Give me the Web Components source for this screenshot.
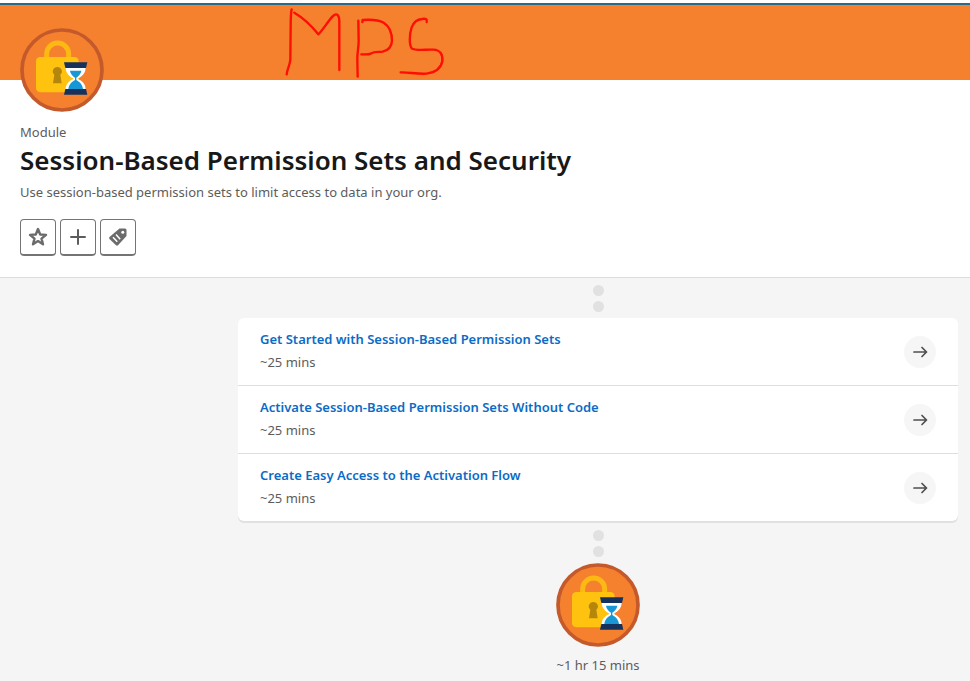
<!DOCTYPE html>
<html lang="en">
<head>
<meta charset="utf-8">
<meta name="viewport" content="width=device-width, initial-scale=1">
<title>Session-Based Permission Sets and Security</title>
<style>
  body {
    margin: 0;
    min-height: 100vh;
    background: #f5f5f5;
    color: #5c5c5c;
    font: 13px/20px "Noto Sans", "Open Sans", sans-serif;
  }
</style>
</head>
<body>
<module-page>
  <module-header slot="header" kind="Module" heading="Session-Based Permission Sets and Security">
    Use session-based permission sets to limit access to data in your org.
  </module-header>
  <unit-list>
    <unit-row href="#get-started" time="~25 mins">Get Started with Session-Based Permission Sets</unit-row>
    <unit-row href="#activate" time="~25 mins">Activate Session-Based Permission Sets Without Code</unit-row>
    <unit-row href="#easy-access" time="~25 mins">Create Easy Access to the Activation Flow</unit-row>
  </unit-list>
  <span slot="total">~1 hr 15 mins</span>
</module-page>

<script>
/**
 * Shared base: clones the html getter into an open shadow root.
 */
class TrailElement extends HTMLElement {
  constructor() {
    super();
    this.template = document.createElement("template");
    this.attachShadow({ mode: "open" });
  }
  connectedCallback() {
    this.template.innerHTML = this.html;
    this.shadowRoot.replaceChildren(this.template.content.cloneNode(true));
  }
}

/**
 * `module-badge`
 * Round badge with a padlock and an hourglass
 */
class ModuleBadge extends TrailElement {
  get html() {
    return `
<style>
:host {
  display: block;
  width: 84px;
  height: 84px;
}
svg {
  display: block;
  width: 100%;
  height: 100%;
}
</style>
<svg viewBox="0 0 252 252" role="img" aria-label="Module badge">
  <circle cx="126" cy="126" r="120" fill="#f5812f" stroke="#c45a2c" stroke-width="11"/>
  <path d="M80 92V78a33 33 0 0 1 66 0v14" fill="none" stroke="#fdb913" stroke-width="15"/>
  <rect x="48" y="87" width="128" height="106" rx="13" fill="#ffc20e"/>
  <path d="M112 117a13 13 0 0 1 9 23l4 26H99l4-26a13 13 0 0 1 9-23z" fill="#b5860c"/>
  <path d="M137 118h60c0 18-10 27-24 34 14 7 24 15 24 33h-60c0-18 10-26 24-33-14-7-24-16-24-34z" fill="#fff"/>
  <path d="M150 128h34c-2 12-10 17-15 21v7c9 5 18 13 20 27h-44c2-14 11-22 20-27v-7c-5-4-13-9-15-21z" fill="#1797d4"/>
  <path d="M132 103h70l-4 17h-62zM136 183h62l4 17h-70z" fill="#16325c"/>
</svg>`;
  }
}
customElements.define("module-badge", ModuleBadge);

/**
 * `icon-button`
 * Square outlined button, the icon goes in the slot
 */
class IconButton extends TrailElement {
  get html() {
    return `
<style>
:host {
  display: block;
}
button {
  display: grid;
  place-items: center;
  box-sizing: border-box;
  width: 36px;
  height: 37px;
  padding: 0;
  border: 1px solid #747474;
  border-bottom-width: 2px;
  border-radius: 4px;
  background: #fff;
  color: #5c5c5c;
  cursor: pointer;
}
</style>
<button type="button" aria-label="${this.getAttribute("label")}"><slot></slot></button>`;
  }
}
customElements.define("icon-button", IconButton);

/**
 * `ink-note`
 * Freehand pen strokes drawn over the banner
 */
class InkNote extends TrailElement {
  get html() {
    return `
<style>
:host {
  display: block;
  width: 190px;
  height: 85px;
}
svg {
  display: block;
  width: 100%;
  height: 100%;
}
</style>
<svg viewBox="0 0 570 255" fill="none" stroke="#fe0d00" stroke-width="7" stroke-linecap="round" stroke-linejoin="round" role="img" aria-label="MPS">
  <path d="M50 223C51 207 60 197 61 178L62 80C62 54 62 42 65 28"/>
  <path d="M73 38C102 55 130 84 145 103C160 88 172 66 188 49C199 38 207 43 208 62L208 210"/>
  <path d="M265 62L266 122C266 145 261 160 262 180L263 230"/>
  <path d="M277 66L278 60C302 58 326 60 341 68C357 78 366 94 366 122C365 142 355 151 338 155C324 157 315 154 304 160C294 165 286 163 274 163"/>
  <path d="M470 66C472 57 467 55 456 57C440 58 431 67 425 82C418 102 417 134 425 145C435 153 466 148 490 149C512 150 519 165 517 184C513 204 498 217 470 221C440 223 416 216 392 217"/>
</svg>`;
  }
}
customElements.define("ink-note", InkNote);

/**
 * `module-header`
 * Banner, badge, title and actions
 */
class ModuleHeader extends TrailElement {
  get html() {
    return `
<style>
:host {
  display: block;
  position: relative;
  background: #fff;
  border-bottom: 1px solid #dcdcdc;
}
.banner {
  height: 75px;
  border-top: 2px solid #286a87;
  margin-top: 3px;
  background: #f5812f;
}
ink-note {
  position: absolute;
  top: -3px;
  left: 270px;
}
.content {
  display: flow-root;
  padding: 0 20px 21px;
}
module-badge {
  margin-top: -52px;
}
p {
  margin: 0;
}
.kind {
  margin-top: 10px;
}
h1 {
  margin: 3px 0 7px;
  color: #181818;
  font-size: 26px;
  font-weight: 600;
  line-height: 30px;
}
.actions {
  display: flex;
  gap: 4px;
  margin-top: 17px;
}
</style>
<div class="banner"></div>
<ink-note></ink-note>
<div class="content">
  <module-badge></module-badge>
  <p class="kind">${this.getAttribute("kind")}</p>
  <h1>${this.getAttribute("heading")}</h1>
  <p><slot></slot></p>
  <div class="actions">
    <icon-button label="Favorite">
      <svg width="20" height="20" viewBox="0 0 20 20" fill="none" stroke="#6b6b6b" stroke-width="2.400" stroke-linejoin="round"><path d="M10 2l2.200 5.500 5.800.4-4.500 3.700 1.500 5.700-5-3.200-5 3.200 1.500-5.700L2 7.900l5.800-.4z"/></svg>
    </icon-button>
    <icon-button label="Add">
      <svg width="20" height="20" viewBox="0 0 20 20" fill="none" stroke="#5c5c5c" stroke-width="2" stroke-linecap="round"><path d="M10 3v14M3 10h14"/></svg>
    </icon-button>
    <icon-button label="Tag">
      <svg width="20" height="20" viewBox="0 0 20 20"><path d="M11.500 1.500h5.500a1.500 1.500 0 0 1 1.500 1.500v6L10 18.300a1.500 1.500 0 0 1-2 0L1.500 12a1.500 1.500 0 0 1 0-2z" fill="#6b6b6b"/><circle cx="14.800" cy="5.200" r="1.500" fill="#fff"/><path d="M5 10.200l4.300 4.600M8 7.600l4.200 4.600" stroke="#fff" stroke-width="1.500"/></svg>
    </icon-button>
  </div>
</div>`;
  }
}
customElements.define("module-header", ModuleHeader);

/**
 * `trail-dots`
 * Two dots that join the steps of the trail
 */
class TrailDots extends TrailElement {
  get html() {
    return `
<style>
:host {
  display: grid;
  gap: 5px;
}
i {
  width: 11px;
  height: 11px;
  border-radius: 50%;
  background: #e1e1e1;
}
</style>
<i></i><i></i>`;
  }
}
customElements.define("trail-dots", TrailDots);

/**
 * `unit-row`
 * One unit: linked title, duration and arrow
 */
class UnitRow extends TrailElement {
  get html() {
    const href = this.getAttribute("href");
    return `
<style>
:host {
  display: flex;
  align-items: center;
  justify-content: space-between;
  padding: 0 22px;
}
.text {
  padding: 11px 0 13px;
}
.title {
  color: #0b6bc6;
  font-weight: 600;
  text-decoration: none;
}
p {
  margin: 3px 0 0;
}
.go {
  display: grid;
  flex: none;
  place-items: center;
  width: 32px;
  height: 32px;
  border-radius: 50%;
  background: #f6f6f6;
}
</style>
<div class="text">
  <a class="title" href="${href}"><slot></slot></a>
  <p>${this.getAttribute("time")}</p>
</div>
<a class="go" href="${href}" aria-label="Open unit">
  <svg width="16" height="14" viewBox="0 0 16 14" fill="none" stroke="#4f4f4f" stroke-width="1.700" stroke-linecap="round" stroke-linejoin="round"><path d="M2 7h12.500M10 2.500L14.500 7 10 11.500"/></svg>
</a>`;
  }
}
customElements.define("unit-row", UnitRow);

/**
 * `unit-list`
 * White card around the unit rows
 */
class UnitList extends TrailElement {
  get html() {
    return `
<style>
:host {
  display: block;
  border-radius: 6px;
  background: #fff;
  box-shadow: 0 2px 0 #e1e1e1;
}
::slotted(unit-row:not(:last-child)) {
  border-bottom: 1px solid #dedede;
}
</style>
<slot></slot>`;
  }
}
customElements.define("unit-list", UnitList);

/**
 * `module-page`
 * Header on top, trail of units in the main column below
 */
class ModulePage extends TrailElement {
  get html() {
    return `
<style>
:host {
  display: flow-root;
  background: #fff;
}
main {
  display: grid;
  grid-template-columns: minmax(0, 1fr);
  justify-items: center;
  row-gap: 6px;
  padding: 7px 12px 6px 238px;
  background: #f5f5f5;
}
::slotted(unit-list) {
  justify-self: stretch;
  margin-bottom: 3px;
}
module-badge {
  margin-bottom: 2px;
}
</style>
<slot name="header"></slot>
<main>
  <trail-dots></trail-dots>
  <slot></slot>
  <trail-dots></trail-dots>
  <module-badge></module-badge>
  <slot name="total"></slot>
</main>`;
  }
}
customElements.define("module-page", ModulePage);
</script>
</body>
</html>
